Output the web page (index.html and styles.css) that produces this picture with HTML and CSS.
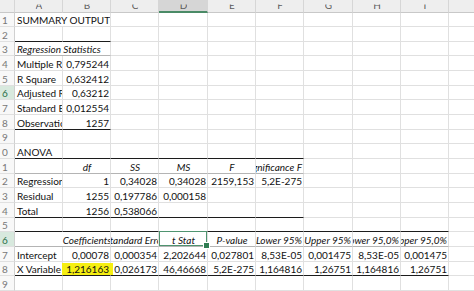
FILE: index.html
```html
<!DOCTYPE html>
<html lang="en">
<head>
<meta charset="utf-8">
<title>Summary Output</title>
<link rel="stylesheet" href="styles.css">
</head>
<body>
<div class="sheet">
  <div class="row hdr">
    <div class="c corner"></div><div class="c"><span>A</span></div><div class="c"><span>B</span></div><div class="c"><span>C</span></div><div class="c on"><span>D</span></div><div class="c"><span>E</span></div><div class="c"><span>F</span></div><div class="c"><span>G</span></div><div class="c"><span>H</span></div><div class="c"><span>I</span></div><div class="c"></div>
  </div>
  <div class="row">
    <div class="c rh">1</div><div class="c w2">SUMMARY OUTPUT</div><div class="c"></div><div class="c"></div><div class="c"></div><div class="c"></div><div class="c"></div><div class="c"></div><div class="c"></div><div class="c"></div>
  </div>
  <div class="row">
    <div class="c rh">2</div><div class="c lb"></div><div class="c lb"></div><div class="c"></div><div class="c"></div><div class="c"></div><div class="c"></div><div class="c"></div><div class="c"></div><div class="c"></div><div class="c"></div>
  </div>
  <div class="row">
    <div class="c rh">3</div><div class="c w2 i hb">Regression Statistics</div><div class="c"></div><div class="c"></div><div class="c"></div><div class="c"></div><div class="c"></div><div class="c"></div><div class="c"></div><div class="c"></div>
  </div>
  <div class="row">
    <div class="c rh">4</div><div class="c">Multiple R</div><div class="c r">0,795244</div><div class="c"></div><div class="c"></div><div class="c"></div><div class="c"></div><div class="c"></div><div class="c"></div><div class="c"></div><div class="c"></div>
  </div>
  <div class="row">
    <div class="c rh">5</div><div class="c">R Square</div><div class="c r">0,632412</div><div class="c"></div><div class="c"></div><div class="c"></div><div class="c"></div><div class="c"></div><div class="c"></div><div class="c"></div><div class="c"></div>
  </div>
  <div class="row">
    <div class="c rh on">6</div><div class="c">Adjusted R Square</div><div class="c r">0,63212</div><div class="c"></div><div class="c"></div><div class="c"></div><div class="c"></div><div class="c"></div><div class="c"></div><div class="c"></div><div class="c"></div>
  </div>
  <div class="row">
    <div class="c rh">7</div><div class="c">Standard Error</div><div class="c r">0,012554</div><div class="c"></div><div class="c"></div><div class="c"></div><div class="c"></div><div class="c"></div><div class="c"></div><div class="c"></div><div class="c"></div>
  </div>
  <div class="row">
    <div class="c rh">8</div><div class="c lb">Observations</div><div class="c r lb">1257</div><div class="c"></div><div class="c"></div><div class="c"></div><div class="c"></div><div class="c"></div><div class="c"></div><div class="c"></div><div class="c"></div>
  </div>
  <div class="row">
    <div class="c rh">9</div><div class="c"></div><div class="c"></div><div class="c"></div><div class="c"></div><div class="c"></div><div class="c"></div><div class="c"></div><div class="c"></div><div class="c"></div><div class="c"></div>
  </div>
  <div class="row">
    <div class="c rh">0</div><div class="c lb">ANOVA</div><div class="c lb"></div><div class="c lb"></div><div class="c lb"></div><div class="c lb"></div><div class="c lb"></div><div class="c"></div><div class="c"></div><div class="c"></div><div class="c"></div>
  </div>
  <div class="row">
    <div class="c rh">1</div><div class="c hb"></div><div class="c i m hb">df</div><div class="c i m hb">SS</div><div class="c i m hb">MS</div><div class="c i m hb">F</div><div class="c i r hb"><span>Significance F</span></div><div class="c"></div><div class="c"></div><div class="c"></div><div class="c"></div>
  </div>
  <div class="row">
    <div class="c rh">2</div><div class="c">Regression</div><div class="c r">1</div><div class="c r">0,34028</div><div class="c r">0,34028</div><div class="c r">2159,153</div><div class="c r">5,2E-275</div><div class="c"></div><div class="c"></div><div class="c"></div><div class="c"></div>
  </div>
  <div class="row">
    <div class="c rh">3</div><div class="c">Residual</div><div class="c r">1255</div><div class="c r">0,197786</div><div class="c r">0,000158</div><div class="c"></div><div class="c"></div><div class="c"></div><div class="c"></div><div class="c"></div><div class="c"></div>
  </div>
  <div class="row">
    <div class="c rh">4</div><div class="c lb">Total</div><div class="c r lb">1256</div><div class="c r lb">0,538066</div><div class="c lb"></div><div class="c lb"></div><div class="c lb"></div><div class="c"></div><div class="c"></div><div class="c"></div><div class="c"></div>
  </div>
  <div class="row">
    <div class="c rh">5</div><div class="c lb"></div><div class="c lb"></div><div class="c lb"></div><div class="c lb"></div><div class="c lb"></div><div class="c lb"></div><div class="c lb"></div><div class="c lb"></div><div class="c lb"></div><div class="c"></div>
  </div>
  <div class="row">
    <div class="c rh on">6</div><div class="c w2 i m hb coef"><span>Coefficients</span></div><div class="c i m hb"><span>Standard Error</span></div><div class="c i m hb sel">t Stat</div><div class="c i m hb">P-value</div><div class="c i r hb"><span>Lower 95%</span></div><div class="c i r hb"><span>Upper 95%</span></div><div class="c i r hb"><span>Lower 95,0%</span></div><div class="c i r hb"><span>Upper 95,0%</span></div><div class="c"></div>
  </div>
  <div class="row">
    <div class="c rh">7</div><div class="c">Intercept</div><div class="c r">0,00078</div><div class="c r">0,000354</div><div class="c r">2,202644</div><div class="c r">0,027801</div><div class="c r">8,53E-05</div><div class="c r">0,001475</div><div class="c r">8,53E-05</div><div class="c r">0,001475</div><div class="c"></div>
  </div>
  <div class="row">
    <div class="c rh">8</div><div class="c lb">X Variable 1</div><div class="c r lb ov"><span class="hl">1,216163</span></div><div class="c r lb">0,026173</div><div class="c r lb">46,46668</div><div class="c r lb">5,2E-275</div><div class="c r lb">1,164816</div><div class="c r lb">1,26751</div><div class="c r lb">1,164816</div><div class="c r lb">1,26751</div><div class="c"></div>
  </div>
  <div class="row">
    <div class="c rh">9</div><div class="c"></div><div class="c"></div><div class="c"></div><div class="c"></div><div class="c"></div><div class="c"></div><div class="c"></div><div class="c"></div><div class="c"></div><div class="c"></div>
  </div>
</div>
</body>
</html>
```

FILE: styles.css
```css
* { box-sizing: border-box; margin: 0; padding: 0; }
html, body { width: 474px; height: 291px; overflow: hidden; background: #fff; }
body { font-family: Lato, "Liberation Sans", sans-serif; font-size: 10px; color: #111; }

.sheet { display: flex; flex-direction: column; width: 497px; }
.row {
  display: grid;
  grid-template-columns: 15px 48px 48px 48px 49px 48px 48px 49px 48px 48px 48px;
  height: 14.66px;
  flex: none;
}
.hdr { height: 15.5px; margin-top: -3px; }

.c {
  display: flex;
  align-items: flex-end;
  min-width: 0;
  overflow: hidden;
  white-space: nowrap;
  padding: 0 1px 0 2px;
  line-height: 12px;
  border-right: 1px solid #e0e0e0;
  border-bottom: 1px solid #e0e0e0;
}
.c span { flex: none; }
.w2 { grid-column: span 2; }
.r { justify-content: flex-end; }
.m { justify-content: center; }
.i { font-style: italic; }
.lb { border-bottom-color: #1c1c1c; }
.hb { border-bottom-color: #b4b4b4; }
.coef { padding-left: 50px; }

.hdr .c {
  background: #eeeeee;
  color: #5c5c5c;
  justify-content: center;
  border-right-color: #d6d6d6;
  border-bottom-color: #c8c8c8;
  padding-bottom: 1px;
}
.hdr .c span { clip-path: inset(6px 0 0 0); }
.hdr .on { background: #d6d6d6; border-bottom: 2px solid #4a8a66; padding-bottom: 0; }

.rh { background: #f8f8f8; color: #777; border-right-color: #d0d0d0; padding-left: 2px; }
.rh.on { background: #d8e9de; color: #2a6f48; }

.sel { position: relative; overflow: visible; }
.sel::after { content: ""; position: absolute; inset: -1px 0 0 0; border: 1.5px solid #4f9470; }
.sel::before {
  content: ""; position: absolute; right: -3px; bottom: -3px;
  width: 5px; height: 5px; background: #2f7d52; border: 1px solid #fff; z-index: 2;
}

.ov { overflow: visible; }
.hl { background: #f6ef12; padding: 0 4px; margin-right: -4px; }
```
